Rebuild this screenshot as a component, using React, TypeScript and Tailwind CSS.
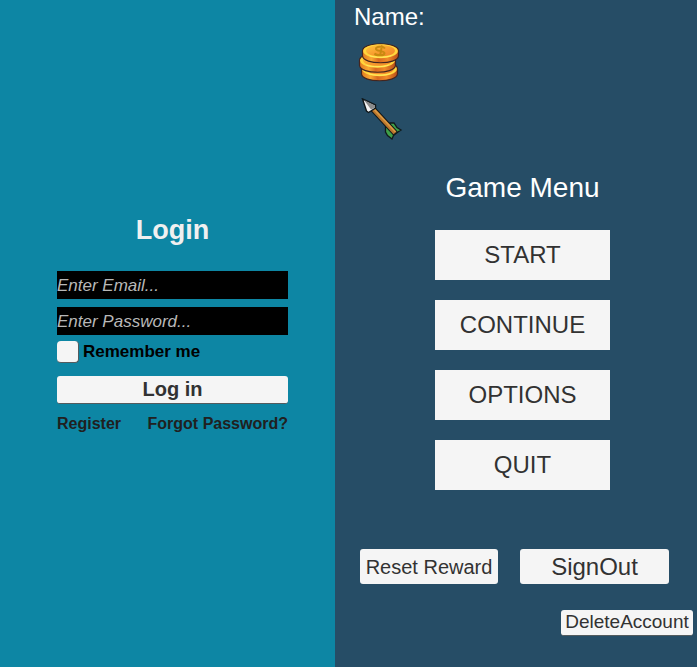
import type { ButtonHTMLAttributes } from 'react'
import clsx from 'clsx'

const MENU_ITEMS = ['START', 'CONTINUE', 'OPTIONS', 'QUIT']

// bottom coin first, so that each one covers the coin below it
const COINS = [
  { x: 22.5, y: 28 },
  { x: 20.5, y: 19.5 },
  { x: 23.5, y: 10 },
]

function CoinsIcon() {
  return (
    <svg width="42" height="40" viewBox="1 2 42 40" role="img" aria-label="Coins">
      <defs>
        <linearGradient id="rim">
          <stop offset="0" stopColor="#e07a20" />
          <stop offset=".25" stopColor="#f9a832" />
          <stop offset=".45" stopColor="#d9691f" />
          <stop offset=".7" stopColor="#f08b28" />
          <stop offset="1" stopColor="#b84d18" />
        </linearGradient>
        <linearGradient id="face" x2="1" y2="1">
          <stop offset="0" stopColor="#ffc63c" />
          <stop offset=".6" stopColor="#f6972d" />
          <stop offset="1" stopColor="#ef8427" />
        </linearGradient>
      </defs>
      {COINS.map(({ x, y }) => (
        <g key={y} transform={`translate(${x} ${y})`}>
          <path
            d="M-18 0C-18-9.500 18-9.500 18 0v5C17 14-17 14-18 5z"
            fill="url(#rim)"
            stroke="#43251f"
            strokeWidth="1.2"
          />
          <path d="M-17.4 0C-17-9 17-9 17.4 0 17 9.5-17 9.5-17.4 0z" fill="#ffd53c" />
          <path d="M-14.5-.3C-14-7.5 14-7.500 14.500-.3 14 7.200-14 7.200-14.500-.3z" fill="url(#face)" />
          <path d="M-11 4.800C-5 6.800 6 6.600 11 4.600" fill="none" stroke="#fff06a" strokeWidth=".8" />
        </g>
      ))}
      <path
        d="M28 7.500c-2-2.500-9-2-9 .4s9 1.600 8.500 4.400-8 2.600-10 .2M25 4.500l-2 10.500"
        fill="none"
        stroke="#c98a10"
        strokeWidth="2"
      />
    </svg>
  )
}

function ArrowIcon() {
  return (
    <svg width="42" height="42" viewBox="2 3 42 42" role="img" aria-label="Arrows">
      <path
        d="M30.5 33l.5-5h4l3 4.500 4 2.500-3 2-2.500 2zM31 32h-4.500v5l2 3.500 4.500 3.500 1.500-3.500 2-1.500z"
        fill="#3f9f48"
        stroke="#10181b"
        strokeWidth="1.3"
      />
      <path d="M12 12l24.500 26.500" stroke="#10181b" strokeWidth="6" />
      <path d="M12 12l24 26" stroke="#b9762c" strokeWidth="4" />
      <path d="M13 12l23.500 25" stroke="#dc9a45" strokeWidth="1.6" />
      <path d="M3.5 4l13 6v3l-7 4.500-2-1.500z" fill="#f4f4f4" stroke="#10181b" strokeWidth="1.4" />
      <path d="M5 5l11 5.400v2.200l-4 1.900z" fill="#8b8b8b" />
    </svg>
  )
}

function Button({ className, ...props }: ButtonHTMLAttributes<HTMLButtonElement>) {
  return (
    <button
      type="button"
      className={clsx('bg-[#f5f5f5] text-[#323232] whitespace-nowrap flex items-center justify-center', className)}
      {...props}
    />
  )
}

function LoginPanel() {
  return (
    <form className="bg-[#0d86a4] pl-[57px] pr-[47px] pt-[212px] font-bold" onSubmit={(e) => e.preventDefault()}>
      <h1 className="text-center text-[27px] leading-9 text-[#f0f0f0]">Login</h1>
      <div className="mt-[23px] flex flex-col gap-2">
        <input
          type="email"
          aria-label="Email"
          placeholder="Enter Email..."
          className="h-7 w-full bg-black pt-px text-[17px] font-normal italic text-white placeholder:text-[#b8b8b8]"
        />
        <input
          type="password"
          aria-label="Password"
          placeholder="Enter Password..."
          className="h-7 w-full bg-black pt-px text-[17px] font-normal italic text-white placeholder:text-[#b8b8b8]"
        />
      </div>
      <label className="mt-1 flex items-center gap-1 text-[17px] text-black">
        <input
          type="checkbox"
          className="size-[22px] appearance-none rounded-sm border-b border-r border-[#535b5e] bg-[#f5f5f5] checked:bg-[#323232]"
        />
        Remember me
      </label>
      <Button type="submit" className="mt-[11px] h-7 w-full rounded-[3px] border-b border-[#535b5e] text-xl">
        Log in
      </Button>
      <div className="mt-2 flex justify-between whitespace-nowrap text-base text-[#202020]">
        <a href="#register">Register</a>
        <a href="#forgot-password">Forgot Password?</a>
      </div>
    </form>
  )
}

function GameMenu() {
  return (
    <main className="bg-[#264d66]">
      <div className="flex flex-col items-start pl-[19px] pt-px text-white">
        <p className="text-2xl leading-8">Name:</p>
        <div className="mt-[10px] pl-1">
          <CoinsIcon />
        </div>
        <div className="mt-[15px] pl-[7px]">
          <ArrowIcon />
        </div>
      </div>

      <div className="pl-[100px] pr-[87px] pt-[30px]">
        <h2 className="whitespace-nowrap text-center text-[28px] leading-9 text-white">Game Menu</h2>
        <nav className="mt-6 flex flex-col gap-5">
          {MENU_ITEMS.map((item) => (
            <Button key={item} className="h-[50px] w-full text-2xl">
              {item}
            </Button>
          ))}
        </nav>
      </div>

      <div className="mt-[59px] flex justify-between pl-[25px] pr-7">
        <Button className="h-[35px] w-[138px] rounded-[3px] text-xl">Reset Reward</Button>
        <Button className="h-[35px] w-[149px] rounded-[3px] text-2xl">SignOut</Button>
      </div>
      <div className="mt-[26px] flex justify-end pr-1">
        <Button className="h-[26px] w-[132px] rounded-[3px] border-b border-[#535b5e] text-[19px]">DeleteAccount</Button>
      </div>
    </main>
  )
}

export default function App() {
  return (
    <div className="grid min-h-screen grid-cols-[335fr_362fr] font-['Liberation_Sans',Arial,sans-serif]">
      <LoginPanel />
      <GameMenu />
    </div>
  )
}
